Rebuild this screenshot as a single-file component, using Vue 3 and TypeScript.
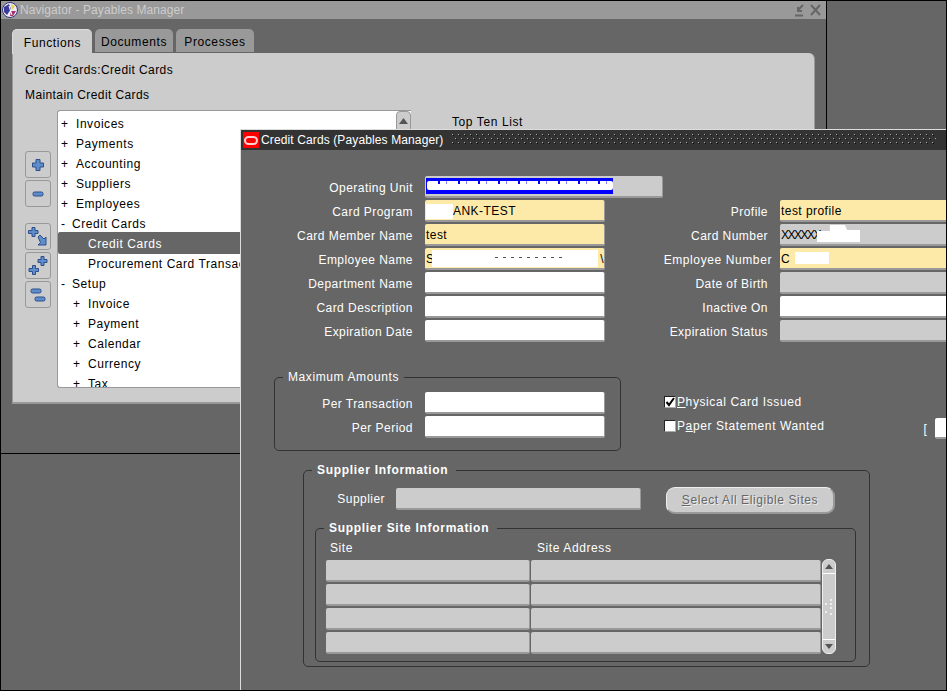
<script setup lang="ts">
interface TreeItem { mark: string; label: string; level: number; selected?: boolean }
interface FormRow { label: string; kind: string; value?: string }

const tabs = ['Functions', 'Documents', 'Processes']
const tree: TreeItem[] = [
  { mark: '+', label: 'Invoices', level: 0 },
  { mark: '+', label: 'Payments', level: 0 },
  { mark: '+', label: 'Accounting', level: 0 },
  { mark: '+', label: 'Suppliers', level: 0 },
  { mark: '+', label: 'Employees', level: 0 },
  { mark: '-', label: 'Credit Cards', level: 0 },
  { mark: '', label: 'Credit Cards', level: 1, selected: true },
  { mark: '', label: 'Procurement Card Transactions', level: 1 },
  { mark: '-', label: 'Setup', level: 0 },
  { mark: '+', label: 'Invoice', level: 1 },
  { mark: '+', label: 'Payment', level: 1 },
  { mark: '+', label: 'Calendar', level: 1 },
  { mark: '+', label: 'Currency', level: 1 },
  { mark: '+', label: 'Tax', level: 1 },
]
const leftRows: FormRow[] = [
  { label: 'Card Program', kind: 'req', value: 'ANK-TEST' },
  { label: 'Card Member Name', kind: 'req', value: 'test' },
  { label: 'Employee Name', kind: 'req', value: 'S' },
  { label: 'Department Name', kind: 'open' },
  { label: 'Card Description', kind: 'open' },
  { label: 'Expiration Date', kind: 'open' },
]
const rightRows: FormRow[] = [
  { label: 'Profile', kind: 'req', value: 'test profile' },
  { label: 'Card Number', kind: 'ro', value: 'XXXXXX' },
  { label: 'Employee Number', kind: 'req', value: 'C' },
  { label: 'Date of Birth', kind: 'ro' },
  { label: 'Inactive On', kind: 'open' },
  { label: 'Expiration Status', kind: 'ro' },
]
const siteRows = [1, 2, 3, 4]
</script>

<template>
  <div class="desktop">
    <section class="nav-win">
      <header class="nav-title">
        <svg class="globe" width="16" height="16" viewBox="0 0 16 16">
          <circle cx="8" cy="8" r="7.5" fill="#ededf5" stroke="#34347a" />
          <path d="M2 5 L7 2 L9 7 L5 13 L2 10 Z" fill="#3b3b9a" />
          <path d="M9 2 L13 4 L10 8 Z" fill="#e5d24a" />
          <path d="M9 9 L14 9 L11 14 L8 14 Z" fill="#a5326e" />
          <path d="M7 4 L10 13" stroke="#fff" stroke-width="1" />
        </svg>
        <span class="nav-title-text">Navigator - Payables Manager</span>
        <svg class="win-ctl" width="28" height="14" viewBox="0 0 28 14">
          <path d="M1 12.5 H9 M9 2 L4 7 M4 4 V8 H8" stroke="#666" stroke-width="2" fill="none" />
          <path d="M17 2 L26 12 M26 2 L17 12" stroke="#666" stroke-width="2" fill="none" />
        </svg>
      </header>
      <div class="nav-body">
        <div class="tabs">
          <div v-for="(t, i) in tabs" :key="t" class="tab" :class="{ active: i === 0 }">{{ t }}</div>
        </div>
        <div class="panel">
          <div class="crumb">Credit Cards:Credit Cards</div>
          <div class="crumb second">Maintain Credit Cards</div>
          <div class="panel-main">
            <div class="tools">
              <button class="tool">
                <svg width="14" height="14" viewBox="0 0 14 14"><path class="ico" d="M5 1.5 H9 V5 H12.5 V9 H9 V12.5 H5 V9 H1.5 V5 H5 Z" /></svg>
              </button>
              <button class="tool">
                <svg width="14" height="14" viewBox="0 0 14 14"><rect class="ico" x="2" y="5" width="10" height="4" rx="1.5" /></svg>
              </button>
              <button class="tool gap">
                <svg width="20" height="20" viewBox="0 0 20 20">
                  <path class="ico" d="M4 0.5 H7 V3.5 H10 V6.5 H7 V9.5 H4 V6.5 H0.5 V3.5 H4 Z" />
                  <path class="ico" d="M10 10 L12 8 L16 12 L18 10 V18 H10 L12.5 15.5 Z" />
                </svg>
              </button>
              <button class="tool">
                <svg width="20" height="20" viewBox="0 0 20 20">
                  <path class="ico" d="M13 0.5 H16 V3.5 H19 V6.5 H16 V9.5 H13 V6.5 H10 V3.5 H13 Z" />
                  <path class="ico" d="M4.5 9.5 H7.5 V12.5 H10.5 V15.5 H7.5 V18.5 H4.5 V15.5 H1 V12.5 H4.5 Z" />
                </svg>
              </button>
              <button class="tool">
                <svg width="20" height="20" viewBox="0 0 20 20">
                  <rect class="ico" x="3" y="4" width="10" height="4" rx="1.5" />
                  <rect class="ico" x="7" y="12" width="10" height="4" rx="1.5" />
                </svg>
              </button>
            </div>
            <div class="tree">
              <div
                v-for="(item, i) in tree"
                :key="i"
                class="tree-row"
                :class="[`lv${item.level}`, { selected: item.selected, minus: item.mark === '-' }]"
              >
                <span class="mark">{{ item.mark }}</span><span class="tree-label">{{ item.label }}</span>
              </div>
              <div class="tree-scroll"><svg width="9" height="6" viewBox="0 0 9 6"><path d="M4.5 0 L9 6 H0 Z" fill="#555" /></svg></div>
            </div>
            <div class="top-ten">Top Ten List</div>
          </div>
        </div>
      </div>
    </section>

    <section class="dialog">
      <header class="dlg-title">
        <span class="oracle"><i></i></span>
        <span class="dlg-title-text">Credit Cards (Payables Manager)</span>
        <svg class="dots" width="484" height="12">
          <defs>
            <pattern id="grip" width="6" height="8" patternUnits="userSpaceOnUse">
              <rect x="0" y="0" width="1" height="1" fill="#aaa" />
              <rect x="1" y="1" width="1" height="1" fill="#111" />
              <rect x="3" y="4" width="1" height="1" fill="#aaa" />
              <rect x="4" y="5" width="1" height="1" fill="#111" />
            </pattern>
          </defs>
          <rect width="484" height="12" fill="url(#grip)" />
        </svg>
      </header>
      <div class="dlg-body">
        <div class="form-grid">
          <label class="lbl">Operating Unit</label>
          <div class="field ro wide">
            <div class="sel"><i class="smear"></i></div>
          </div>
          <span></span><span></span>
          <template v-for="(row, i) in leftRows" :key="row.label">
            <label class="lbl">{{ row.label }}</label>
            <div class="field" :class="row.kind">
              <span v-if="row.value" class="val" :class="{ shifted: i === 0 }">{{ row.value }}</span>
              <i v-if="i === 0" class="blot b-program"></i>
              <template v-if="i === 2">
                <i class="blot b-employee"></i>
                <i class="traces"></i>
                <span class="tail">\</span>
              </template>
            </div>
            <label class="lbl" :class="{ over: i === 2 }">{{ rightRows[i].label }}</label>
            <div class="field" :class="rightRows[i].kind">
              <span v-if="rightRows[i].value" class="val" :class="{ tight: i === 1 }">{{ rightRows[i].value }}</span>
              <i v-if="i === 1" class="blot b-cardno"></i>
              <i v-if="i === 2" class="blot b-empno"></i>
            </div>
          </template>
        </div>

        <div class="mid">
          <fieldset class="group max">
            <legend>Maximum Amounts</legend>
            <div class="amount-row"><label class="lbl">Per Transaction</label><div class="field open"></div></div>
            <div class="amount-row"><label class="lbl">Per Period</label><div class="field open"></div></div>
          </fieldset>
          <div class="checks">
            <div class="check"><span class="box on"><svg width="10" height="10" viewBox="0 0 10 10"><path d="M1.5 5 L4 8 L9 1" stroke="#000" stroke-width="2" fill="none" /></svg></span><span><u>P</u>hysical Card Issued</span></div>
            <div class="check"><span class="box"></span><span>P<u>a</u>per Statement Wanted</span></div>
          </div>
          <div class="flex-bit"><span class="brace">[</span><div class="field open stub"></div></div>
        </div>

        <fieldset class="group supplier">
          <legend>Supplier Information</legend>
          <div class="supplier-row">
            <label class="lbl">Supplier</label>
            <div class="field ro supplier-field"></div>
            <button class="pill"><u>S</u>elect All Eligible Sites</button>
          </div>
          <fieldset class="group site">
            <legend>Supplier Site Information</legend>
            <div class="site-head"><span>Site</span><span>Site Address</span></div>
            <div class="site-table">
              <div class="site-rows">
                <div v-for="r in siteRows" :key="r" class="site-row">
                  <div class="field ro"></div>
                  <div class="field ro"></div>
                </div>
              </div>
              <div class="vscroll">
                <div class="vs-btn up"><svg width="8" height="5" viewBox="0 0 8 5"><path d="M4 0 L8 5 H0 Z" fill="#555" /></svg></div>
                <div class="vs-track">
                  <svg width="8" height="18" viewBox="0 0 8 18">
                    <path d="M5 1h2v2h-2zM0 5h2v2h-2zM5 9h2v2h-2zM0 13h2v2h-2zM5 5h2v2h-2zM5 15h2v2h-2z" fill="#eee" />
                  </svg>
                </div>
                <div class="vs-btn down"><svg width="8" height="5" viewBox="0 0 8 5"><path d="M0 0 H8 L4 5 Z" fill="#555" /></svg></div>
              </div>
            </div>
          </fieldset>
        </fieldset>
      </div>
    </section>
  </div>
</template>

<style>
html, body { margin: 0; padding: 0; background: #666; overflow: hidden; }
</style>

<style scoped>
* { box-sizing: border-box; }
.desktop {
  position: relative;
  width: 947px;
  height: 691px;
  background: #666;
  overflow: hidden;
  border: 1px solid #000;
  font-family: "Liberation Sans", Arial, sans-serif;
  font-size: 12px;
  letter-spacing: 0.6px;
  color: #000;
}
.nav-win {
  position: absolute;
  left: 0;
  top: 0;
  width: 826px;
  height: 453px;
  border-right: 1px solid #000;
  border-bottom: 1px solid #000;
}
.nav-title {
  height: 18px;
  background: #999;
  display: flex;
  align-items: center;
  padding-left: 1px;
  color: #ccc;
}
.nav-title-text { margin-left: 2px; flex: 1; letter-spacing: 0.08px; }
.win-ctl { margin-right: 4px; }
.nav-body { padding: 10px 10px 0 11px; }
.tabs { display: flex; gap: 3px; height: 24px; }
.tab {
  width: 78px;
  height: 23px;
  background: #999;
  border-radius: 5px 5px 0 0;
  text-align: center;
  line-height: 26px;
}
.tab.active { width: 80px; height: 25px; background: #ccc; position: relative; z-index: 1; border-top: 1px solid #ddd; border-left: 1px solid #ddd; }
.panel {
  width: 803px;
  height: 351px;
  background: #ccc;
  border-radius: 0 6px 0 0;
  border-right: 1px solid #999;
  border-bottom: 2px solid #999;
  border-left: 1px solid #999;
  padding: 9px 0 0 12px;
}
.crumb { height: 17px; line-height: 17px; letter-spacing: 0.4px; }
.crumb.second { margin-top: 8px; }
.panel-main { display: flex; margin-top: 6px; }
.tools { width: 32px; display: flex; flex-direction: column; gap: 2px; padding-top: 41px; }
.tool {
  width: 26px;
  height: 27px;
  padding: 0;
  background: #ccc;
  border: 1px solid #999;
  border-radius: 3px;
  display: flex;
  align-items: center;
  justify-content: center;
}
.tool.gap { margin-top: 14px; }
.ico { fill: #5f8ccb; stroke: #2d4f8a; stroke-width: 1; }
.tree {
  position: relative;
  width: 354px;
  height: 278px;
  background: #fff;
  border-top: 1px solid #999;
  border-left: 1px solid #999;
  border-bottom: 1px solid #999;
  border-radius: 3px 0 0 3px;
  padding-top: 3px;
  overflow: hidden;
  letter-spacing: 0.55px;
}
.tree-row { height: 20px; line-height: 20px; white-space: nowrap; display: flex; }
.mark { display: inline-block; width: 15px; margin-left: 3px; }
.tree-row.minus .mark { width: 11px; }
.lv1 .mark { margin-left: 15px; }
.tree-row.selected { background: #666; color: #fff; border-radius: 2px 0 0 2px; box-shadow: 0 -2px 0 #666; }
.tree-scroll {
  position: absolute;
  right: 0;
  top: 0;
  width: 15px;
  height: 20px;
  background: #ccc;
  border: 1px solid #999;
  border-radius: 4px 4px 0 0;
  display: flex;
  align-items: center;
  justify-content: center;
}
.top-ten { margin-left: 41px; padding-top: 5px; }

.dialog {
  position: absolute;
  left: 239px;
  top: 128px;
  width: 707px;
  height: 562px;
  background: #666;
  border-top: 1px solid #ddd;
  border-left: 1px solid #ddd;
  color: #fff;
}
.dlg-title {
  height: 20px;
  background: #333;
  display: flex;
  align-items: center;
  padding-left: 2px;
}
.oracle {
  width: 16px;
  height: 16px;
  background: #f00;
  display: flex;
  align-items: center;
  justify-content: center;
}
.oracle i {
  width: 14px;
  height: 9px;
  border: 2px solid #ffd0d0;
  border-radius: 5px;
}
.dlg-title-text { margin-left: 2px; width: 191px; white-space: nowrap; letter-spacing: 0.12px; }
.dots { flex: none; }
.dlg-body { padding-top: 26px; }
.form-grid {
  display: grid;
  grid-template-columns: 172px 180px 151px 180px;
  column-gap: 12px;
  grid-auto-rows: 24px;
}
.lbl { text-align: right; line-height: 24px; white-space: nowrap; letter-spacing: 0.45px; }
.lbl.over { margin-right: -4px; letter-spacing: 0.6px; }
.field {
  position: relative;
  height: 22px;
  border-right: 1px solid #999;
  border-bottom: 2px solid #999;
  border-radius: 2px;
  color: #000;
  line-height: 23px;
  white-space: nowrap;
  overflow: hidden;
  letter-spacing: 0.45px;
}
.req { background: #fdeaa8; }
.open { background: #fff; }
.ro { background: #ccc; }
.wide { width: 238px; }
.val { padding-left: 1px; }
.val.shifted { padding-left: 28px; }
.val.tight { letter-spacing: -1.5px; }
.sel { position: absolute; left: 1px; top: 2px; width: 187px; height: 16px; background: #00f; }
.smear {
  position: absolute;
  left: 1px;
  right: 0;
  top: 3px;
  height: 9px;
  border-radius: 2px;
  background: repeating-linear-gradient(90deg, #fff 0 11px, #00f 11px 13px, #fff 13px 19px, #88f 19px 20px) 0 0 / 100% 3px no-repeat, #fff;
}
.blot { position: absolute; background: #fff; }
.b-program { left: 1px; top: 4px; width: 27px; height: 15px; }
.b-employee { left: 7px; top: 2px; width: 166px; height: 17px; }
.traces {
  position: absolute;
  left: 70px;
  top: 9px;
  width: 70px;
  height: 1px;
  background: repeating-linear-gradient(90deg, #555 0 3px, transparent 3px 8px);
}
.tail { position: absolute; right: 0; top: 0; }
.b-cardno {
  left: 37px;
  top: 1px;
  width: 43px;
  height: 17px;
  clip-path: polygon(30% 0, 65% 0, 70% 30%, 100% 30%, 100% 100%, 0 100%, 0 35%, 30% 35%);
}
.b-empno { left: 15px; top: 4px; width: 34px; height: 12px; }

.group {
  margin: 0;
  border: 1px solid #333;
  border-radius: 5px;
  min-width: 0;
}
.group legend { padding: 0 5px; margin-left: 8px; line-height: 14px; }
.mid { display: flex; margin-top: 26px; margin-left: 33px; height: 93px; align-items: flex-start; }
.max { flex: none; width: 347px; height: 81px; padding: 8px 0 0; }
.amount-row {
  display: grid;
  grid-template-columns: 138px 180px;
  column-gap: 12px;
  height: 24px;
}
.checks { flex: none; margin-left: 43px; padding-top: 25px; display: flex; flex-direction: column; gap: 10px; }
.check { display: flex; align-items: center; height: 14px; gap: 1px; white-space: nowrap; }
.box {
  width: 12px;
  height: 12px;
  background: #fff;
  border-top: 1px solid #222;
  border-left: 1px solid #222;
  border-right: 1px solid #aaa;
  border-bottom: 1px solid #aaa;
  display: flex;
  align-items: center;
  justify-content: center;
}
.flex-bit { flex: none; margin-left: 99px; padding-top: 48px; display: flex; gap: 8px; line-height: 22px; }
.brace { width: 3px; }
.stub { width: 40px; height: 21px; flex: none; }
.supplier {
  margin-left: 62px;
  width: 567px;
  height: 204px;
  padding: 0 14px 0 11px;
}
.group.supplier > legend, .site > legend { font-weight: 700; letter-spacing: 0.7px; padding-right: 8px; }
.group.supplier > legend { margin-left: -3px; }
.group.site > legend { margin-left: -2px; }
.supplier-row { display: flex; align-items: flex-start; height: 27px; margin-top: 10px; }
.supplier-row .lbl { width: 70px; }
.supplier-field { width: 245px; margin-left: 11px; margin-top: 1px; }
.pill {
  margin-left: 25px;
  width: 169px;
  height: 27px;
  background: #ccc;
  border: 1px solid #eee;
  border-bottom: 2px solid #999;
  border-right: 2px solid #999;
  border-radius: 9px;
  color: #666;
  font: inherit;
  letter-spacing: inherit;
  padding: 0;
  text-shadow: 1px 1px 0 #eee;
}
.site { margin-top: 7px; height: 141px; width: 541px; padding: 5px 0 0 10px; }
.site-head { display: flex; height: 20px; line-height: 16px; padding-left: 4px; }
.site-head span:first-child { width: 207px; }
.site-table { display: flex; }
.site-rows { display: flex; flex-direction: column; gap: 2px; width: 496px; }
.site-row { display: grid; grid-template-columns: 204px 290px; column-gap: 1px; }
.vscroll {
  width: 14px;
  height: 95px;
  margin-top: -1px;
  background: #ccc;
  border: 1px solid #eee;
  border-radius: 6px;
  display: flex;
  flex-direction: column;
  overflow: hidden;
}
.vs-btn { height: 14px; display: flex; align-items: center; justify-content: center; }
.vs-btn.up { border-bottom: 1px solid #fff; }
.vs-btn.down { border-top: 1px solid #fff; }
.vs-track { flex: 1; display: flex; align-items: center; justify-content: center; }
</style>
